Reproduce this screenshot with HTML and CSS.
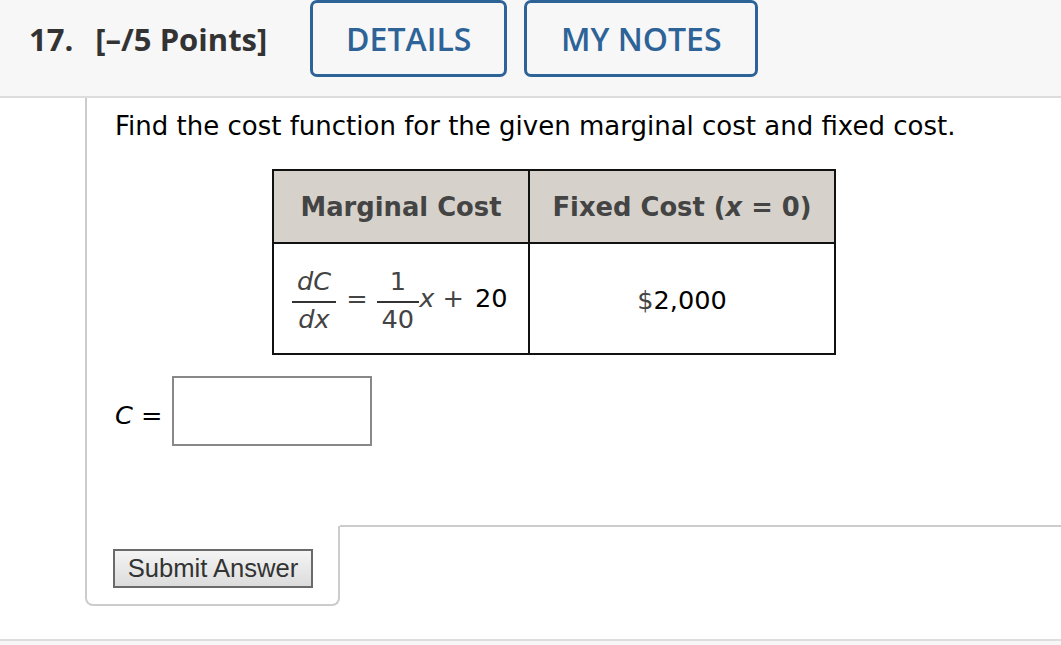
FILE: index.html
```html
<!DOCTYPE html>
<html lang="en">
<head>
<meta charset="utf-8">
<title>Question 17</title>
<link rel="stylesheet" href="styles.css">
</head>
<body>
<header class="qhead">
  <div class="qtitle"><span class="qnum">17.</span><span class="qpts">[–/5 Points]</span></div>
  <div class="qbtns">
    <button class="qbtn details">DETAILS</button>
    <button class="qbtn notes">MY NOTES</button>
  </div>
</header>
<main class="qbody">
  <section class="panel">
    <p class="prompt">Find the cost function for the given marginal cost and fixed cost.</p>
    <table class="costs">
      <thead>
        <tr>
          <th class="c1">Marginal Cost</th>
          <th class="c2">Fixed Cost (<i>x</i> = 0)</th>
        </tr>
      </thead>
      <tbody>
        <tr>
          <td class="c1 math"><span class="frac"><span class="num"><i>dC</i></span><span class="den"><i>dx</i></span></span><span class="eq">=</span><span class="frac"><span class="num">1</span><span class="den">40</span></span><i>x</i> + <span class="blk num20">20</span></td>
          <td class="c2 money">$<span class="blk">2,000</span></td>
        </tr>
      </tbody>
    </table>
    <div class="answer">
      <span class="lbl"><i>C</i> =</span>
      <span class="box"></span>
    </div>
  </section>
  <div class="bottom">
    <div class="submit-cell"><button class="submit">Submit Answer</button></div>
    <div class="side-cell"></div>
  </div>
</main>
<div class="nextq"></div>
</body>
</html>
```

FILE: styles.css
```css
* { box-sizing: border-box; }
html, body { margin: 0; padding: 0; background: #fff; }
body {
  width: 1061px;
  height: 645px;
  overflow: hidden;
  font-family: "DejaVu Sans", Verdana, sans-serif;
  color: #000;
}

/* header */
.qhead {
  height: 98px;
  background: #f7f7f7;
  border-bottom: 2px solid #dddddd;
  display: flex;
  align-items: flex-start;
  padding-left: 29px;
}
.qtitle {
  height: 77px;
  display: flex;
  align-items: center;
  font-family: "Open Sans", "DejaVu Sans", sans-serif;
  font-weight: 700;
  font-size: 31px;
  color: #333;
  margin-right: 43px;
  white-space: nowrap;
}
.qnum { margin-right: 22px; }
.qbtns { display: flex; gap: 17px; }
.qbtn {
  flex: none;
  height: 77px;
  padding: 0;
  border: 3px solid #2d6397;
  border-radius: 7px;
  background: transparent;
  font-family: "Open Sans", "DejaVu Sans", sans-serif;
  font-weight: 600;
  font-size: 32px;
  color: #2d6397;
  letter-spacing: 0;
}
.details { width: 197px; }
.notes { width: 234px; }

/* question panel */
.qbody { margin-left: 85px; }
.panel {
  height: 428px;
  border-left: 2px solid #cccccc;
  padding: 13px 0 0 28px;
}
.prompt {
  margin: 0;
  font-size: 26px;
  line-height: 30px;
  color: #000;
  white-space: nowrap;
}

.costs {
  margin: 28px 0 0 157px;
  border-collapse: separate;
  border-spacing: 0;
  border: 2px solid #111;
}
.costs th {
  height: 73px;
  background: #d6d2cb;
  border-bottom: 2px solid #111;
  font-size: 25.8px;
  font-weight: 700;
  color: #444;
  text-align: center;
  vertical-align: middle;
  padding: 0;
}
.costs td {
  height: 109px;
  padding: 3px 0 0;
  font-size: 25.6px;
  color: #444;
  vertical-align: middle;
}
.c1 { width: 256px; border-right: 2px solid #111; }
.c2 { width: 304px; }
.math { padding-left: 18px !important; white-space: nowrap; }
.money { text-align: center; }
.blk { color: #000; }
.num20 { margin-left: 3px; }

.frac {
  display: inline-flex;
  flex-direction: column;
  align-items: stretch;
  vertical-align: 17px;
  text-align: center;
}
.num {
  line-height: 28px;
  padding: 0 5px 5.5px;
  border-bottom: 2px solid #333;
}
.den {
  line-height: 28px;
  padding: 2.5px 5px 0;
}
.eq { margin: 0 9px 0 10px; }

.answer {
  margin-top: 21px;
  display: flex;
  align-items: center;
  font-size: 25.6px;
}
.lbl { margin-top: 7px; margin-right: 10px; white-space: nowrap; }
.box {
  flex: none;
  width: 200px;
  height: 70px;
  border: 2px solid #888;
  background: #fff;
}

/* bottom row */
.bottom { display: flex; height: 80px; }
.submit-cell {
  width: 255px;
  height: 80px;
  border-left: 2px solid #cccccc;
  border-right: 2px solid #cccccc;
  border-bottom: 2px solid #cccccc;
  border-radius: 0 0 8px 8px;
  padding: 23px 0 0 26px;
}
.submit {
  width: 200px;
  height: 39px;
  padding: 0;
  border: 2px solid #6a6a6a;
  background: linear-gradient(#f4f4f4, #dcdcdc);
  font-family: "Liberation Sans", Arial, sans-serif;
  font-size: 25.6px;
  color: #333;
}
.side-cell {
  flex: 1;
  height: 0;
  margin-top: -1px;
  border-top: 2px solid #cccccc;
}

.nextq {
  margin-top: 33px;
  height: 10px;
  border-top: 2px solid #dddddd;
  background: #f7f7f7;
}
```
